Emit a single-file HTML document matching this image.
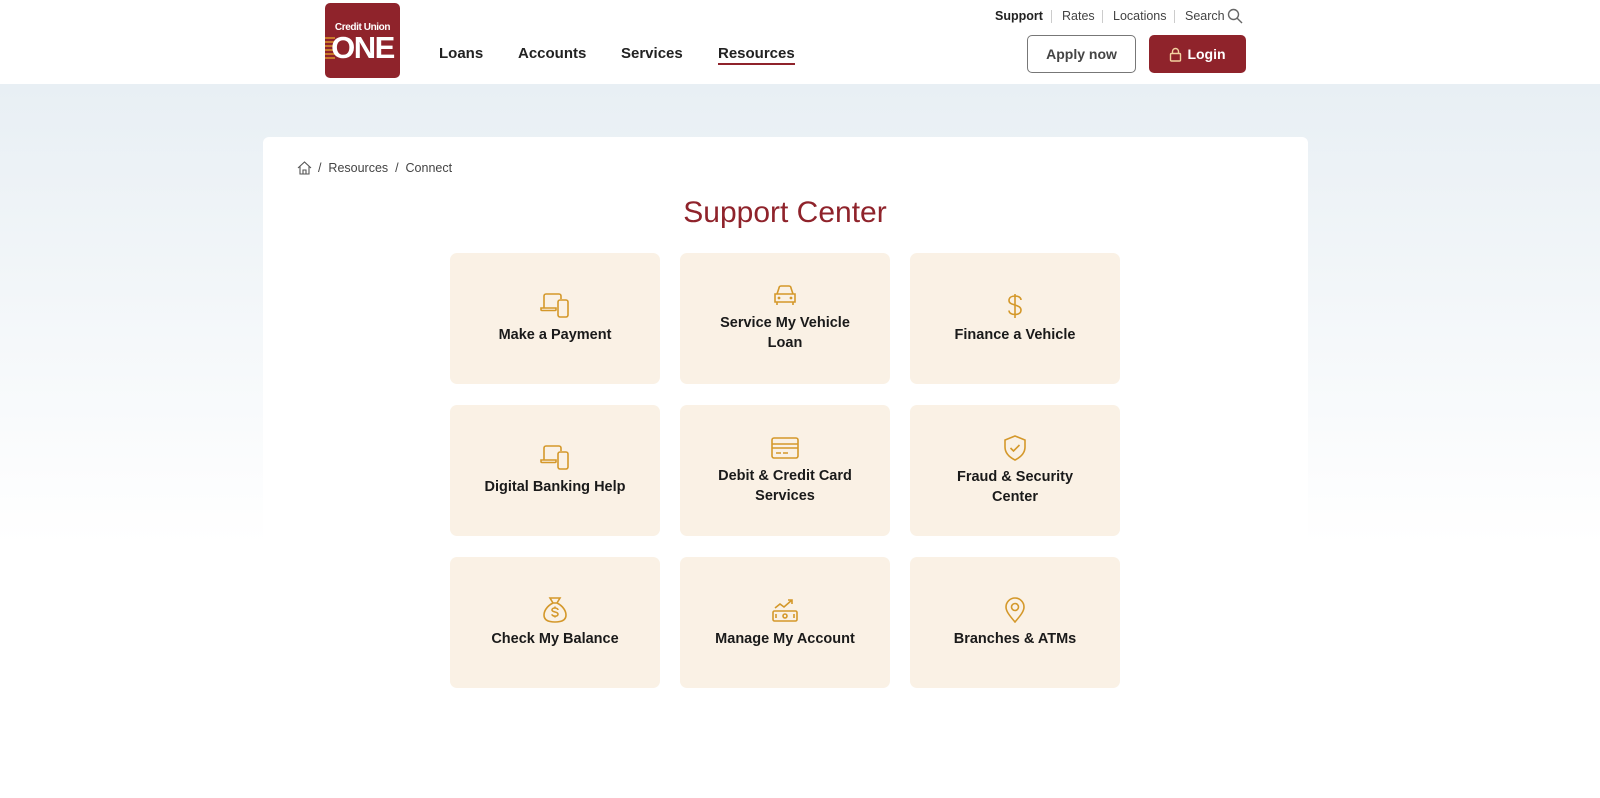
<!DOCTYPE html>
<html style="overflow:hidden;height:798px;background:#fff"><head><meta charset="utf-8"><style>
*{margin:0;padding:0;box-sizing:border-box}
body{width:1600px;height:798px;overflow:hidden;font-family:"Liberation Sans",sans-serif;background:linear-gradient(#e8eff4 84px,#ffffff 545px);position:relative;color:#1f1f1f}
.hdr{position:absolute;left:0;top:0;width:1600px;height:84px;background:#fff}
.logo{position:absolute;left:325px;top:3px;width:75px;height:75px;background:#8f232b;border-radius:5px;color:#fff;overflow:hidden}
.logo .t{position:absolute;left:0;width:75px;text-align:center;top:19px;font-size:10px;font-weight:bold;letter-spacing:-.4px}
.logo .o{position:absolute;left:0;width:75px;text-align:center;top:30px;font-size:31px;font-weight:bold;letter-spacing:-1.5px;line-height:30px}
.logo .s{position:absolute;left:0;top:34px;width:10px;height:24px;background:repeating-linear-gradient(#c8782a 0 2px,transparent 2px 4px)}
.nav a{position:absolute;top:45px;font-size:15px;font-weight:bold;color:#222;text-decoration:none}
.util{position:absolute;top:9px;font-size:12.5px;color:#444}
.sep{position:absolute;top:10px;width:1px;height:13px;background:#ccc}
.btn{position:absolute;top:35px;height:38px;border-radius:5px;font-size:14px;font-weight:bold;display:flex;align-items:center;justify-content:center}
.card{position:absolute;left:263px;top:137px;width:1045px;height:661px;background:#fff;border-radius:6px 6px 0 0}
.tile{position:absolute;width:210px;height:131px;background:#faf1e5;border-radius:7px;display:flex;flex-direction:column;align-items:center;justify-content:center;text-align:center;font-size:14.5px;font-weight:bold;line-height:20px;color:#1a1a1a}
.tile svg{margin-bottom:6px}
</style></head><body>
<div class="hdr">
 <div class="logo"><div class="s"></div><div class="t">Credit Union</div><div class="o">ONE</div></div>
 <div class="nav">
  <a style="left:439px">Loans</a><a style="left:518px">Accounts</a><a style="left:621px">Services</a>
  <a style="left:718px;border-bottom:2px solid #8f232b;padding-bottom:1px">Resources</a>
 </div>
 <span class="util" style="left:995px;font-weight:bold;color:#222">Support</span><div class="sep" style="left:1051px"></div>
 <span class="util" style="left:1062px">Rates</span><div class="sep" style="left:1102px"></div>
 <span class="util" style="left:1113px">Locations</span><div class="sep" style="left:1174px"></div>
 <span class="util" style="left:1185px">Search</span>
 <svg style="position:absolute;left:1227px;top:8px" width="16" height="16" viewBox="0 0 16 16" fill="none" stroke="#666" stroke-width="1.4"><circle cx="6.5" cy="6.5" r="5"/><path d="M10.2 10.2L15 15"/></svg>
 <div class="btn" style="left:1027px;width:109px;border:1px solid #777;color:#444">Apply now</div>
 <div class="btn" style="left:1149px;width:97px;background:#8f232b;color:#fff">
  <svg width="13" height="15" viewBox="0 0 13 15" fill="none" stroke="#f3d2a0" stroke-width="1.4" style="margin-right:5px"><rect x="1.5" y="6.5" width="10" height="7.5" rx="1"/><path d="M3.5 6.5V4.5a3 3 0 016 0v2"/></svg>Login</div>
</div>
<div class="card"></div>
<svg style="position:absolute;left:297px;top:161px" width="15" height="14" viewBox="0 0 15 14" fill="none" stroke="#555" stroke-width="1.1"><path d="M1 7L7.5 1 14 7M3 5.5V13h9V5.5M6 13V9h3v4"/></svg>
<div style="position:absolute;left:318px;top:161px;font-size:12.5px;color:#444">/ &nbsp;Resources &nbsp;/ &nbsp;Connect</div>
<div style="position:absolute;left:0;width:1570px;top:196px;text-align:center;font-size:30px;color:#8f232b">Support Center</div>

<div class="tile" style="left:450px;top:253px"><svg width="30" height="26" viewBox="0 0 30 26" fill="none" stroke="#d4982a" stroke-width="1.6"><path d="M4 15V3a2 2 0 012-2h13a2 2 0 012 2v3M1 15h15v1.5a1 1 0 01-1 1H2a1 1 0 01-1-1z"/><rect x="18" y="7" width="10" height="17" rx="2"/></svg>Make a Payment</div>
<div class="tile" style="left:680px;top:253px"><svg width="26" height="22" viewBox="0 0 26 22" fill="none" stroke="#d4982a" stroke-width="1.6"><path d="M5 9l2-6a2 2 0 012-2h8a2 2 0 012 2l2 6M3 9h20v8H3zM5 17v3M21 17v3M3 9h20"/><circle cx="7" cy="13" r=".6" fill="#d4982a"/><circle cx="19" cy="13" r=".6" fill="#d4982a"/></svg>Service My Vehicle<br>Loan</div>
<div class="tile" style="left:910px;top:253px"><svg width="16" height="26" viewBox="0 0 16 26" fill="none" stroke="#d4982a" stroke-width="1.6"><path d="M8 1v24M14 7c0-2.5-2.5-4-6-4S2 4.5 2 7.5 5 11 8 12s6 2 6 5-2.5 4.5-6 4.5-6-1.5-6-4"/></svg>Finance a Vehicle</div>

<div class="tile" style="left:450px;top:405px"><svg width="30" height="26" viewBox="0 0 30 26" fill="none" stroke="#d4982a" stroke-width="1.6"><path d="M4 15V3a2 2 0 012-2h13a2 2 0 012 2v3M1 15h15v1.5a1 1 0 01-1 1H2a1 1 0 01-1-1z"/><rect x="18" y="7" width="10" height="17" rx="2"/></svg>Digital Banking Help</div>
<div class="tile" style="left:680px;top:405px"><svg width="28" height="24" viewBox="0 0 28 24" fill="none" stroke="#d4982a" stroke-width="1.6"><rect x="1" y="2" width="26" height="20" rx="2"/><path d="M1 8h26M1 12h26M5 17h5M12 17h5"/></svg>Debit &amp; Credit Card<br>Services</div>
<div class="tile" style="left:910px;top:405px"><svg width="24" height="26" viewBox="0 0 24 26" fill="none" stroke="#d4982a" stroke-width="1.6"><path d="M12 1l10 4v7c0 6-4 10-10 13C6 22 2 18 2 12V5z"/><path d="M7.5 13l3 3 6-6"/></svg>Fraud &amp; Security<br>Center</div>

<div class="tile" style="left:450px;top:557px"><svg width="26" height="26" viewBox="0 0 26 26" fill="none" stroke="#d4982a" stroke-width="1.6"><path d="M8 1h10l-3 5h-4zM11 6C5 9 2 14 2 18c0 4 3 7 11 7s11-3 11-7c0-4-3-9-9-12"/><path d="M16 13c0-1-1.3-2-3-2s-3 .8-3 2 1.3 1.6 3 2 3 1 3 2.2-1.3 2-3 2-3-1-3-2M13 9.5v1.5M13 19v1.5"/></svg>Check My Balance</div>
<div class="tile" style="left:680px;top:557px"><svg width="26" height="26" viewBox="0 0 26 26" fill="none" stroke="#d4982a" stroke-width="1.6"><path d="M3 11l5-4 4 3 8-7M16 3h4v4"/><rect x="1" y="14" width="24" height="10" rx="1.5"/><circle cx="13" cy="19" r="2"/><path d="M4 17v4M22 17v4"/></svg>Manage My Account</div>
<div class="tile" style="left:910px;top:557px"><svg width="22" height="26" viewBox="0 0 22 26" fill="none" stroke="#d4982a" stroke-width="1.6"><path d="M11 25C5 18 2 14 2 10a9 9 0 0118 0c0 4-3 8-9 15z"/><circle cx="11" cy="10" r="3.5"/></svg>Branches &amp; ATMs</div>
</body></html>
